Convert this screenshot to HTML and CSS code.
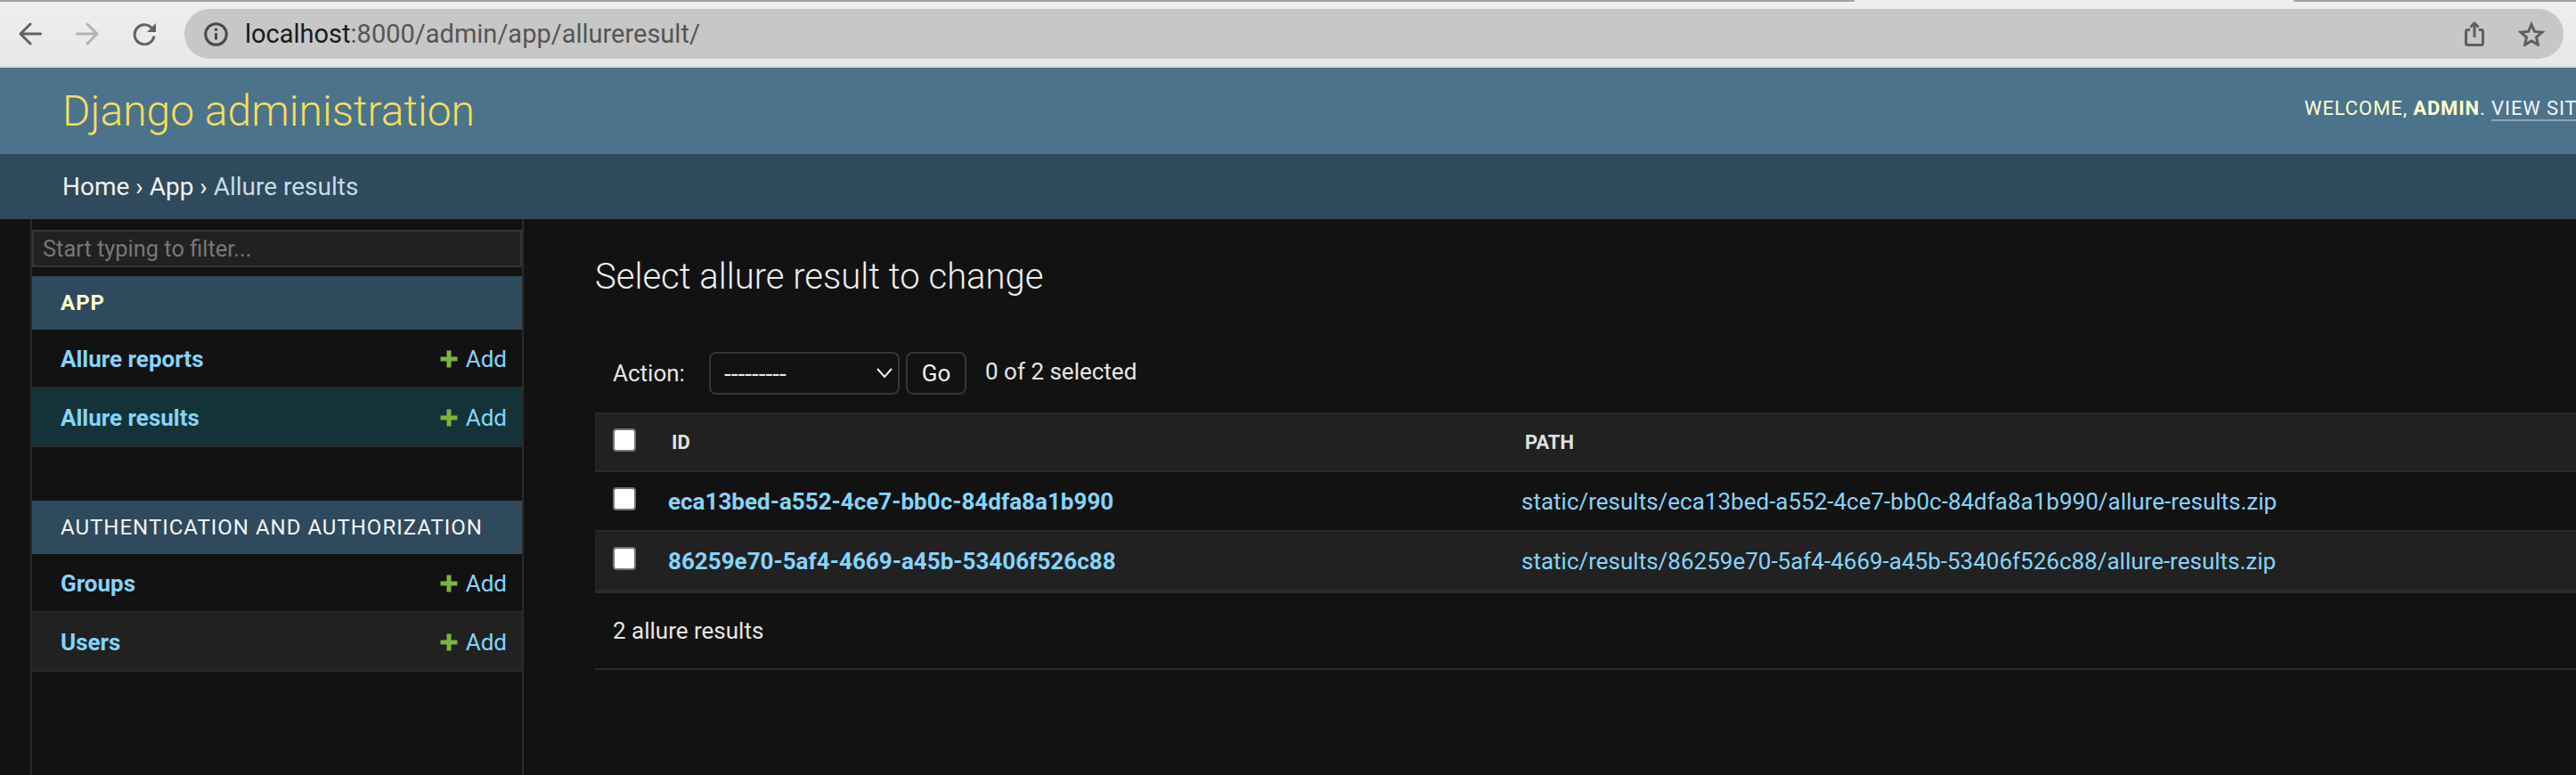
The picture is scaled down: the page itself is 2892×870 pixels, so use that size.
FILE: index.html
```html
<!DOCTYPE html>
<html lang="en">
<head>
<meta charset="utf-8">
<title>Select allure result to change | Django site admin</title>
<link rel="stylesheet" href="styles.css">
</head>
<body>
<div class="tabstrip"><span class="strip-a"></span><span class="strip-b"></span></div>
<div class="toolbar">
  <div class="nav">
    <svg class="nav-icon" viewBox="0 0 26 26"><path d="M24.500 13H2.500M13 2 2 13l11 11" fill="none" stroke="#5f6368" stroke-width="3" stroke-linecap="round" stroke-linejoin="round"/></svg>
    <svg class="nav-icon" viewBox="0 0 26 26"><path d="M1.500 13h22M13 2l11 11-11 11" fill="none" stroke="#b3b3b3" stroke-width="3" stroke-linecap="round" stroke-linejoin="round"/></svg>
    <svg class="nav-icon" viewBox="0 0 26 26"><path d="M22.600 8.200A11 11 0 1 0 24 15.600" fill="none" stroke="#5f6368" stroke-width="3"/><path d="M26 1v10H16z" fill="#5f6368"/></svg>
  </div>
  <div class="urlbar">
    <svg class="info" viewBox="0 0 27 27"><circle cx="13.500" cy="13.500" r="11.800" fill="none" stroke="#4a4a4a" stroke-width="3"/><path d="M13.500 12v7.500" stroke="#4a4a4a" stroke-width="3"/><circle cx="13.500" cy="8.200" r="1.800" fill="#4a4a4a"/></svg>
    <span class="url"><span class="host">localhost</span>:8000/admin/app/allureresult/</span>
    <svg class="share" viewBox="0 0 22 28"><path d="M6 9.500H3.500A2 2 0 0 0 1.500 11.500V24.500A2 2 0 0 0 3.500 26.500H18.500A2 2 0 0 0 20.500 24.500V11.500A2 2 0 0 0 18.500 9.500H16" fill="none" stroke="#5f5f5f" stroke-width="3"/><path d="M11 18V2.500M6.500 6.500 11 2l4.500 4.500" fill="none" stroke="#5f5f5f" stroke-width="3"/></svg>
    <svg class="star" viewBox="0 0 30 28"><path d="M15 3.500l3.400 7.900 8.600.8-6.500 5.700 1.900 8.400L15 21.900l-7.400 4.400 1.900-8.400L3 12.200l8.600-.8z" fill="none" stroke="#5f5f5f" stroke-width="3"/></svg>
  </div>
</div>
<header class="site-header">
  <h1 class="brand">Django administration</h1>
  <div class="user-tools">WELCOME, <strong>ADMIN</strong>. <a class="tool-link">VIEW SITE</a></div>
</header>
<nav class="breadcrumbs">Home › App › <span class="crumb-current">Allure results</span></nav>
<div class="layout">
  <aside class="sidebar">
    <div class="filter">Start typing to filter...</div>
    <section class="app-group">
      <h2 class="group-title current">APP</h2>
      <div class="model-row"><a class="model-name">Allure reports</a><span class="add"><svg class="plus" viewBox="0 0 20 20"><path d="M10 0.500v19M0.500 10h19" stroke="#7cb342" stroke-width="5"/></svg>Add</span></div>
      <div class="model-row active"><a class="model-name">Allure results</a><span class="add"><svg class="plus" viewBox="0 0 20 20"><path d="M10 0.500v19M0.500 10h19" stroke="#7cb342" stroke-width="5"/></svg>Add</span></div>
    </section>
    <section class="app-group">
      <h2 class="group-title">AUTHENTICATION AND AUTHORIZATION</h2>
      <div class="model-row"><a class="model-name">Groups</a><span class="add"><svg class="plus" viewBox="0 0 20 20"><path d="M10 0.500v19M0.500 10h19" stroke="#7cb342" stroke-width="5"/></svg>Add</span></div>
      <div class="model-row alt"><a class="model-name">Users</a><span class="add"><svg class="plus" viewBox="0 0 20 20"><path d="M10 0.500v19M0.500 10h19" stroke="#7cb342" stroke-width="5"/></svg>Add</span></div>
    </section>
  </aside>
  <main class="content">
    <h2 class="page-title">Select allure result to change</h2>
    <div class="actions">
      <span class="action-label">Action:</span>
      <div class="select">---------<svg class="chevron" viewBox="0 0 18 12"><path d="M1 1l8 9 8-9" fill="none" stroke="#f0f0f0" stroke-width="2"/></svg></div>
      <div class="go">Go</div>
      <span class="count">0 of 2 selected</span>
    </div>
    <div class="table">
      <div class="row head"><span class="check"></span><span class="col-id">ID</span><span class="col-path">PATH</span></div>
      <div class="row"><span class="check"></span><a class="col-id id-link">eca13bed-a552-4ce7-bb0c-84dfa8a1b990</a><a class="col-path path-link">static/results/eca13bed-a552-4ce7-bb0c-84dfa8a1b990/allure-results.zip</a></div>
      <div class="row alt last"><span class="check"></span><a class="col-id id-link">86259e70-5af4-4669-a45b-53406f526c88</a><a class="col-path path-link">static/results/86259e70-5af4-4669-a45b-53406f526c88/allure-results.zip</a></div>
    </div>
    <p class="paginator">2 allure results</p>
  </main>
</div>
</body>
</html>
```
FILE: styles.css
```css
* { box-sizing: border-box; }
html, body { margin: 0; height: 870px; overflow: hidden; }
body { background: #121212; font-family: Roboto, "Liberation Sans", sans-serif; color: #eeeeee; width: 2892px; }

.tabstrip { height: 2px; background: #eeeeee; display: flex; justify-content: space-between; }
.strip-a { width: 2082px; background: #a3a3a3; }
.strip-b { width: 317px; background: #a3a3a3; }
.toolbar { height: 74px; background: linear-gradient(#eeeeee, #e8e8e8); border-bottom: 2px solid #d6d6d6; display: flex; align-items: flex-start; padding: 8px 14px 0 21px; }
.nav { display: flex; gap: 38px; padding-top: 15px; width: 186px; flex: none; }
.nav-icon { width: 26px; height: 26px; flex: none; }
.urlbar { flex: 1; height: 56px; background: #c7c7c7; border-radius: 28px; display: flex; align-items: center; padding: 0 21px 0 22px; }
.info { width: 27px; height: 27px; flex: none; margin-right: 19px; }
.url { flex: 1; font-size: 29px; color: #555555; white-space: nowrap; }
.host { color: #1a1a1a; }
.share { width: 22px; height: 28px; flex: none; margin-right: 38px; }
.star { width: 30px; height: 28px; flex: none; }

.site-header { height: 97px; background: #4c738c; display: flex; align-items: center; padding-left: 70px; }
.brand { flex: 1; margin: 0; font-size: 48px; font-weight: 300; color: #f5dd5d; }
.user-tools { flex: none; width: 305px; overflow: hidden; white-space: nowrap; padding-bottom: 6px; font-size: 22px; font-weight: 400; letter-spacing: 0.9px; color: #ffffcc; }
.user-tools strong { font-weight: 700; }
.tool-link { color: #f5f5f5; border-bottom: 2px solid #8fa5b5; }

.breadcrumbs { height: 73px; background: #2f4a5c; padding-left: 70px; font-size: 28px; line-height: 73px; font-weight: 400; color: #f2f2f2; white-space: pre; }
.crumb-current { color: #c4dce8; }

.layout { display: flex; align-items: stretch; height: 624px; }
.sidebar { flex: none; width: 554px; margin-left: 34px; border-left: 2px solid #2a2a2a; border-right: 2px solid #2a2a2a; padding-top: 12px; }
.filter { height: 42px; background: #212121; border: 2px solid #353535; padding-left: 10px; font-size: 25.4px; line-height: 38px; color: #777777; margin-bottom: 10px; }
.app-group { margin-bottom: 60px; }
.group-title { margin: 0; height: 60px; background: #2f4a5c; padding-left: 32px; font-size: 24px; line-height: 60px; font-weight: 400; letter-spacing: 1px; color: #f5f5f5; white-space: nowrap; }
.group-title.current { color: #ffffcc; font-weight: 700; }
.model-row { height: 66px; border-bottom: 2px solid #2a2a2a; display: flex; align-items: center; justify-content: space-between; padding: 1px 17px 0 32px; font-size: 26px; color: #85d4fb; }
.model-row.active { background: #143338; }
.model-row.alt { background: #212121; }
.model-name { font-weight: 700; }
.add { display: flex; align-items: center; gap: 9px; font-weight: 400; }
.plus { width: 20px; height: 20px; flex: none; }

.content { flex: 1; padding: 0 0 0 80px; min-width: 0; }
.page-title { margin: 41px 0 0; font-size: 40px; line-height: 48px; font-weight: 300; color: #eeeeee; }
.actions { margin-top: 60px; height: 48px; display: flex; align-items: center; padding-left: 20px; font-size: 26px; }
.action-label { width: 108px; font-weight: 400; flex: none; color: #e6e6e6; }
.select { width: 214px; height: 48px; border: 2px solid #353535; border-radius: 8px; display: flex; align-items: center; justify-content: space-between; padding: 0 6px 0 15px; font-size: 28px; color: #e6e6e6; flex: none; }
.chevron { width: 18px; height: 12px; flex: none; }
.go { width: 68px; height: 48px; margin-left: 7px; border: 2px solid #353535; border-radius: 8px; display: flex; align-items: center; justify-content: center; flex: none; color: #f0f0f0; }
.count { margin-left: 21px; padding-bottom: 4px; font-weight: 400; color: #e6e6e6; }

.table { margin-top: 20px; border-top: 2px solid #2a2a2a; }
.row { height: 67px; border-bottom: 2px solid #2a2a2a; display: flex; align-items: center; padding-left: 20px; font-size: 26px; }
.row.head { height: 65px; background: #212121; font-size: 22px; font-weight: 700; color: #e0e0e0; }
.row.alt { background: #212121; }
.row.last { height: 69px; border-bottom-width: 4px; }
.check { width: 26px; height: 26px; background: #ffffff; border: 2px solid #767676; border-radius: 4px; flex: none; margin-top: -6px; }
.col-id { margin-left: 36px; width: 958px; flex: none; }
.id-link { font-weight: 700; color: #85d4fb; }
.path-link { color: #85d4fb; }
.head .col-id { margin-left: 40px; width: 958px; }
.paginator { margin: 0; height: 86px; padding-left: 20px; border-bottom: 2px solid #2a2a2a; font-size: 26px; font-weight: 400; line-height: 85px; color: #e6e6e6; }
```
